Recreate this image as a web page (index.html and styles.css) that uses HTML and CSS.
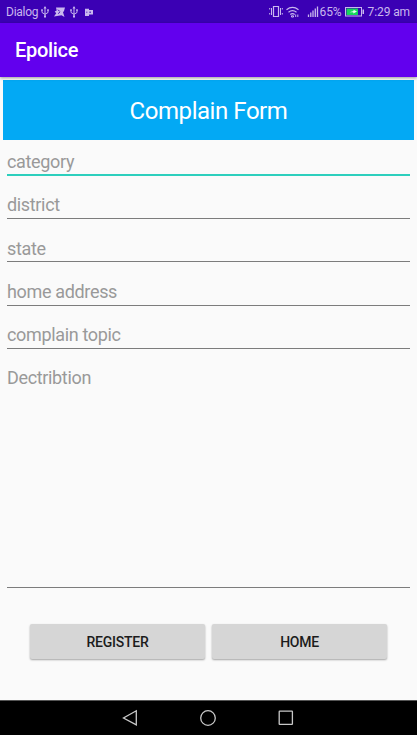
FILE: index.html
```html
<!DOCTYPE html>
<html lang="en">
<head>
<meta charset="utf-8">
<title>Epolice</title>
<link rel="stylesheet" href="styles.css">
</head>
<body>
<div class="screen">
  <div class="status">
    <span class="carrier">Dialog</span>
    <svg class="left-icons" width="60" height="14" viewBox="0 0 60 14" fill="none" stroke="currentColor">
      <g id="usb"><path d="M5 2.5V11M2 5v2.5L5 9.3l3-1.8V5"/><path d="M3.5 3.5 5 1l1.5 2.5zM4 10.5h2v2H4zM1.2 4.2h1.6v1.6H1.2zM7.2 4.2h1.6v1.6H7.2z" fill="currentColor" stroke="none"/></g>
      <path d="M16 2.5h9l-1 3.5-1 1.2 1.5 4.8-3-1.8-7.5 1.3 2.2-3.3-1.5-1.8 2-1z" fill="currentColor" stroke="none"/>
      <path d="m18 4.7 1.8 1.8M18.2 8.6l1.6-1.3" class="cut"/>
      <use href="#usb" x="29"/>
      <path d="M45 3.7h4v1.3h4v4.5h-4V11h-4z" fill="currentColor" stroke="none"/>
      <path d="M49.3 7.2h1.7M46.3 7.2h1" class="cut"/>
    </svg>
    <span class="grow"></span>
    <svg class="right-icons" width="50" height="14" viewBox="0 0 50 14" fill="none" stroke="currentColor">
      <path d="M4.5 1.5h5v10h-5z" stroke-width="1.2"/>
      <path d="M2.5 3v7M11.5 3v7M.7 3v1.5M.7 8v1.5M13.3 3v1.5M13.3 8v1.5"/>
      <path d="M17.5 4.7q6-4.7 12 0M19.5 7.2q4-3.2 8 0M21.3 9.5q2.2-1.8 4.4 0" stroke-width="1.2"/>
      <path d="M22.5 10.8h2v1.2h-2zM26.7 9.5V12M28.8 9.5V12"/>
      <path d="M39.5 9.5V12M41.8 7.5V12M44 5.5V12M46.3 3.5V12M48.5 1.5V12" stroke-width="1.3"/>
    </svg>
    <span class="percent">65%</span>
    <svg class="battery" width="20" height="12" viewBox="0 0 20 12">
      <rect x=".5" y="1.5" width="16" height="8.5" fill="none" stroke="currentColor"/>
      <path d="M17.5 3.5H19v4.5h-1.5z" fill="currentColor"/>
      <rect x="1.5" y="2.5" width="11.5" height="6.5" fill="#16d65b"/>
      <path d="M4.5 6.2 8.5 5V3.7L12 5.6 8.3 7.5V6.2z" fill="#e5fff0"/>
    </svg>
    <span class="clock">7:29 am</span>
  </div>
  <header class="appbar">Epolice</header>
  <main class="content">
    <h1 class="banner">Complain Form</h1>
    <form class="form">
      <div class="field focused">category</div>
      <div class="field">district</div>
      <div class="field">state</div>
      <div class="field">home address</div>
      <div class="field">complain topic</div>
      <div class="field area">Dectribtion</div>
      <div class="actions">
        <button type="button">REGISTER</button>
        <button type="button">HOME</button>
      </div>
    </form>
  </main>
  <nav class="navbar">
    <svg width="16" height="18" viewBox="0 0 16 18"><path d="M14.3 1.8v14L1.5 9z"/></svg>
    <svg width="18" height="18" viewBox="0 0 18 18"><circle cx="9" cy="9" r="7.3"/></svg>
    <svg width="16" height="18" viewBox="0 0 16 18"><rect x="1.2" y="2.2" width="13.2" height="13.2" rx=".5"/></svg>
  </nav>
</div>
</body>
</html>
```
FILE: styles.css
```css
* { box-sizing: border-box; }
body { margin: 0; font-family: Roboto, sans-serif; background: #fafafa; }
.screen { width: 417px; height: 735px; display: flex; flex-direction: column; overflow: hidden; }
.status {
  height: 23px; flex: none; display: flex; align-items: center;
  padding: 1px 7px 0 6px; background: #3b00b4; color: #c9b7ee;
  font-size: 12px; white-space: nowrap;
}
.carrier { letter-spacing: -.25px; }
.left-icons { margin-left: 2px; }
.cut { stroke: #3b00b4; }
.grow { flex: 1; }
.battery { margin: 0 3px; }
.right-icons { margin-right: 1px; }
.clock, .percent { letter-spacing: -.1px; }
.appbar {
  height: 54px; flex: none; padding-left: 15px; line-height: 55px;
  background: #6200ee; color: #fff; font-size: 20px; font-weight: 500; letter-spacing: -.3px;
  box-shadow: 0 1px 3px rgba(0, 0, 0, .4); z-index: 1;
}
.content { flex: 1; padding: 3px 3px 0; background: #fafafa; }
.banner {
  margin: 0; height: 60px; line-height: 62px; text-align: center;
  background: #03a9f4; color: #fff; font-size: 24px; font-weight: 400;
  letter-spacing: -.45px;
}
.form { padding: 0 4px; }
.field {
  height: 43.2px; padding-top: 17.4px; line-height: 24px;
  border-bottom: 1px solid #7c7c7c; color: #999; font-size: 18px; letter-spacing: -.34px;
}
.focused { height: 36px; padding-top: 10px; border-bottom: 2px solid #2dcfbd; }
.area { height: 239.2px; }
.actions { display: flex; gap: 7px; margin-top: 36px; padding: 0 23px; }
.actions button {
  flex: 1; height: 35px; padding: 1px 0 0; border: 0; border-radius: 2px;
  background: #d6d6d6; color: #1c1c1c; font: 500 14px Roboto, sans-serif; letter-spacing: -.25px;
  box-shadow: 0 1px 2px rgba(0, 0, 0, .35);
}
.navbar {
  height: 35px; flex: none; display: flex; justify-content: center; align-items: center;
  gap: 61px; padding-right: 1px; background: #000; border-top: 1px solid #555;
}
.navbar svg { fill: none; stroke: #c8c8c8; stroke-width: 1.3; }
```
